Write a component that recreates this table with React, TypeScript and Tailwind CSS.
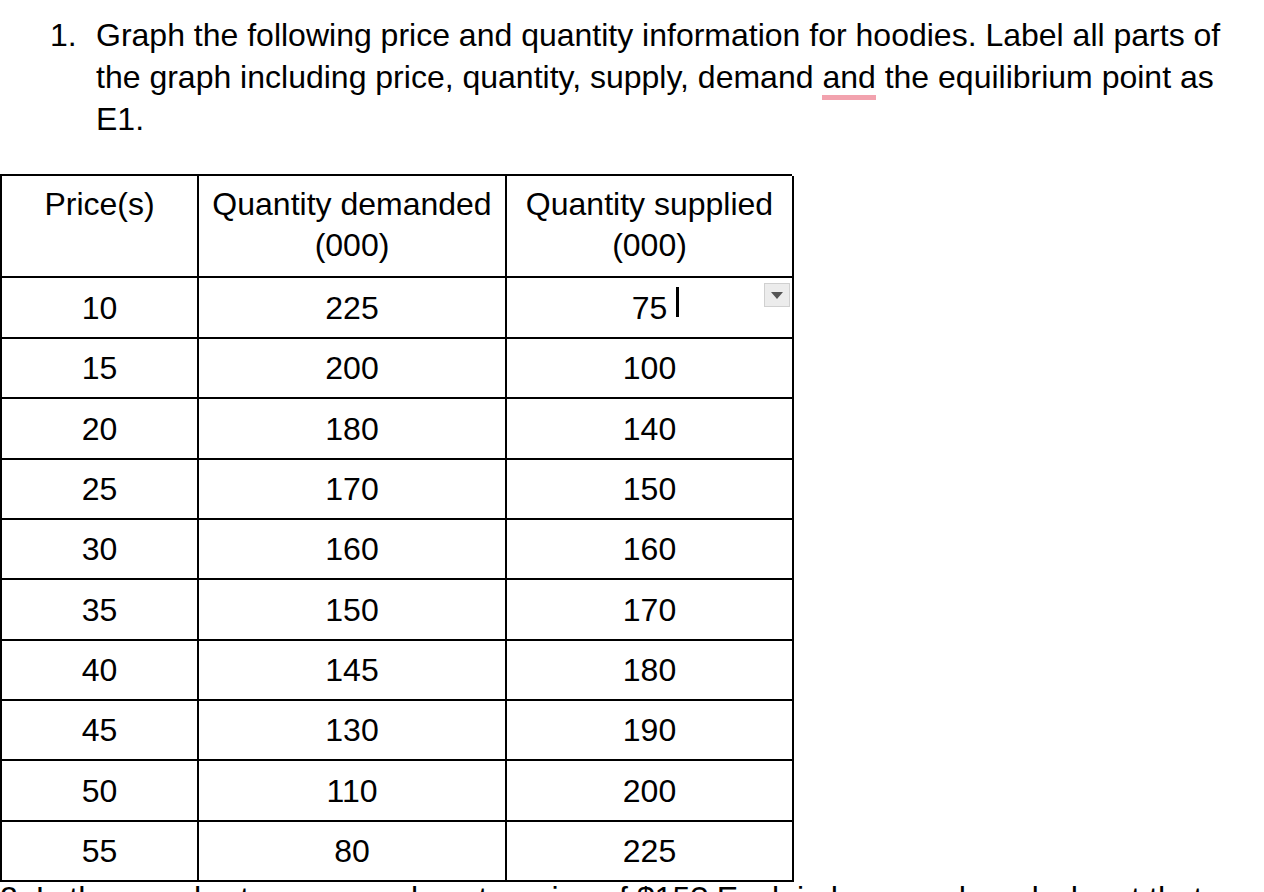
import React from "react";

const rows: { p: string; d: string; s: string; h: string }[] = [
  { p: "10", d: "225", s: "75", h: "h-[61px]" },
  { p: "15", d: "200", s: "100", h: "h-[60px]" },
  { p: "20", d: "180", s: "140", h: "h-[61px]" },
  { p: "25", d: "170", s: "150", h: "h-[60px]" },
  { p: "30", d: "160", s: "160", h: "h-[60px]" },
  { p: "35", d: "150", s: "170", h: "h-[61px]" },
  { p: "40", d: "145", s: "180", h: "h-[60px]" },
  { p: "45", d: "130", s: "190", h: "h-[60px]" },
  { p: "50", d: "110", s: "200", h: "h-[61px]" },
  { p: "55", d: "80", s: "225", h: "h-[60px]" },
];

export default function App() {
  return (
    <div
      className="w-[1264px] h-[892px] overflow-hidden bg-white text-black"
      style={{ fontFamily: '"Liberation Sans", Arial, sans-serif' }}
    >
      <div className="flex pl-[50px] pt-[14px] text-[32px] leading-[42px]">
        <span className="w-[46px] shrink-0">1.</span>
        <p className="w-[1136px]">
          Graph the following price and quantity information for hoodies. Label all parts of the graph including price,
          quantity, supply, demand{" "}
          <span className="relative">
            and
            <span className="absolute left-0 right-0 top-[36px] h-[5px] bg-[#f2a2ae]" />
          </span>{" "}
          the equilibrium point as E1.
        </p>
      </div>

      <div className="mt-[34px] w-[792px] border-l-2 border-t-2 border-black text-[32px]">
        <div className="flex h-[102px]">
          <div className="w-[197px] shrink-0 border-r-2 border-b-2 border-black pt-[8px] text-center leading-[41px]">
            Price(s)
          </div>
          <div className="w-[308px] shrink-0 border-r-2 border-b-2 border-black pt-[8px] text-center leading-[41px]">
            Quantity demanded
            <br />
            (000)
          </div>
          <div className="w-[287px] shrink-0 border-r-2 border-b-2 border-black pt-[8px] text-center leading-[41px]">
            Quantity supplied
            <br />
            (000)
          </div>
        </div>
        {rows.map((r, i) => (
          <div key={r.p} className={`flex ${r.h}`}>
            <div className="flex w-[197px] shrink-0 items-center justify-center border-r-2 border-b-2 border-black">
              {r.p}
            </div>
            <div className="flex w-[308px] shrink-0 items-center justify-center border-r-2 border-b-2 border-black">
              {r.d}
            </div>
            <div className="relative flex w-[287px] shrink-0 items-center justify-center border-r-2 border-b-2 border-black">
              <span className="relative">
                {r.s}
                {i === 0 && (
                  <span className="absolute left-[calc(100%+9px)] top-[3px] h-[30px] w-[3px] bg-black" />
                )}
              </span>
              {i === 0 && (
                <div className="absolute right-[2px] top-[5px] flex h-[24px] w-[26px] items-center justify-center border border-[#d0d0d0] bg-[#ececec]">
                  <svg width="12" height="7" viewBox="0 0 12 7">
                    <path d="M0 0 H12 L6 7 Z" fill="#555" />
                  </svg>
                </div>
              )}
            </div>
          </div>
        ))}
      </div>

      <p className="w-[1250px] text-[32px] leading-[32px]">
        2. Is there a shortage or surplus at a price of $15? Explain how much and why at that price.
      </p>
    </div>
  );
}
